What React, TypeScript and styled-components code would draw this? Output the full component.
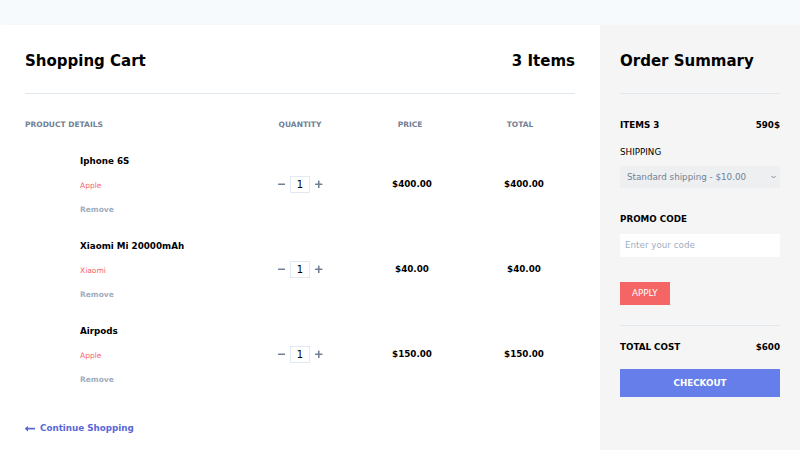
import React from "react";
import styled, { createGlobalStyle } from "styled-components";

const GlobalStyle = createGlobalStyle`
  html, body { margin: 0; padding: 0; }
  body {
    background: #f7fafc;
    font-family: "DejaVu Sans", "Noto Sans", sans-serif;
    font-size: 10px;
    line-height: 1.5;
    color: #000;
  }
  * { box-sizing: border-box; }
`;

const Page = styled.div`
  padding-top: 25px;
`;

const Card = styled.div`
  display: flex;
  box-shadow: 0 4px 6px -1px rgba(0,0,0,0.1), 0 2px 4px -1px rgba(0,0,0,0.06);
`;

const CartPanel = styled.div`
  width: 600px;
  background: #fff;
  padding: 25px;
`;

const SummaryPanel = styled.div`
  width: 200px;
  background: #f5f5f5;
  padding: 25px 20px;
`;

const HeaderRow = styled.div`
  display: flex;
  justify-content: space-between;
  border-bottom: 1px solid #e2e8f0;
  padding-bottom: 20px;
`;

const Title = styled.h1`
  margin: 0;
  font-size: 15px;
  font-weight: 700;
  line-height: 22.5px;
`;

const SummaryTitle = styled(Title)`
  border-bottom: 1px solid #e2e8f0;
  padding-bottom: 20px;
`;

const ColumnHeads = styled.div`
  display: flex;
  margin-top: 25px;
  margin-bottom: 12.5px;
`;

const ColHead = styled.h3<{ $w: string; $center?: boolean }>`
  margin: 0;
  width: ${(p) => p.$w};
  text-align: ${(p) => (p.$center ? "center" : "left")};
  font-size: 7.5px;
  line-height: 11.25px;
  font-weight: 700;
  color: #718096;
  text-transform: uppercase;
`;

const ItemRow = styled.div`
  display: flex;
  align-items: center;
  margin: 0 -20px;
  padding: 12.5px 15px;
`;

const Product = styled.div`
  display: flex;
  width: 40%;
`;

const Thumb = styled.div`
  width: 50px;
  height: 60px;
  flex-shrink: 0;
`;

const ProductInfo = styled.div`
  display: flex;
  flex-direction: column;
  justify-content: space-between;
  margin-left: 10px;
  flex-grow: 1;
`;

const ProductName = styled.span`
  font-weight: 700;
  font-size: 8.75px;
  line-height: 13.125px;
`;

const Brand = styled.span`
  color: #f56565;
  font-size: 7.5px;
  line-height: 11.25px;
`;

const RemoveLink = styled.a`
  color: #a0aec0;
  font-weight: 700;
  font-size: 7.5px;
  line-height: 11.25px;
  text-decoration: none;
`;

const Qty = styled.div`
  display: flex;
  justify-content: center;
  align-items: center;
  width: 20%;
`;

const QtyIcon = styled.svg`
  width: 7.5px;
  fill: #718096;
`;

const QtyInput = styled.input`
  margin: 0 5px;
  width: 20px;
  border: 1px solid #e2e8f0;
  text-align: center;
  font-family: inherit;
  font-size: 10px;
  line-height: 15px;
  padding: 0;
  color: #000;
  background: #fff;
  outline: none;
`;

const Amount = styled.span`
  width: 20%;
  text-align: center;
  font-weight: 700;
  font-size: 8.75px;
  line-height: 13.125px;
`;

const ContinueLink = styled.a`
  display: flex;
  align-items: center;
  margin-top: 25px;
  font-weight: 700;
  font-size: 8.75px;
  line-height: 13.125px;
  color: #5a67d8;
  text-decoration: none;
`;

const ArrowIcon = styled.svg`
  width: 10px;
  margin-right: 5px;
  fill: #5a67d8;
`;

const SumRow = styled.div`
  display: flex;
  justify-content: space-between;
  margin-top: 25px;
  margin-bottom: 12.5px;
  font-weight: 700;
  font-size: 8.75px;
  line-height: 13.125px;
  text-transform: uppercase;
`;

const ShippingBlock = styled.div`
  padding-top: 1.5px;
`;

const Label = styled.label<{ $bold?: boolean }>`
  display: block;
  margin-bottom: 7.5px;
  font-size: 8.75px;
  line-height: 13.125px;
  font-weight: ${(p) => (p.$bold ? 700 : 400)};
  text-transform: uppercase;
`;

const SelectWrap = styled.div`
  position: relative;
`;

const Select = styled.select`
  display: block;
  width: 100%;
  appearance: none;
  -webkit-appearance: none;
  border: none;
  border-radius: 0;
  background: #edeff1;
  padding: 4px 5px 4px 7px;
  font-family: inherit;
  font-size: 8.75px;
  line-height: 13.125px;
  height: 22px;
  color: #718096;
  outline: none;
`;

const Chevron = styled.svg`
  position: absolute;
  right: 4px;
  top: 9px;
  width: 5px;
  height: 4px;
  pointer-events: none;
`;

const PromoBlock = styled.div`
  padding: 25px 0;
`;

const PromoInput = styled.input`
  display: block;
  width: 100%;
  border: none;
  background: #fff;
  padding: 5px;
  font-family: inherit;
  font-size: 8.75px;
  line-height: 13.125px;
  height: 23.125px;
  outline: none;
  &::placeholder { color: #a0aec0; }
`;

const ApplyButton = styled.button`
  border: none;
  background: #f56565;
  color: #fff;
  padding: 5px 12px;
  font-family: inherit;
  font-size: 8.75px;
  line-height: 13.125px;
  text-transform: uppercase;
  cursor: pointer;
`;

const TotalBlock = styled.div`
  border-top: 1px solid #e2e8f0;
  margin-top: 20px;
`;

const TotalRow = styled.div`
  display: flex;
  justify-content: space-between;
  padding: 15px 0;
  font-weight: 700;
  font-size: 8.75px;
  line-height: 13.125px;
  text-transform: uppercase;
`;

const CheckoutButton = styled.button`
  display: block;
  width: 100%;
  border: none;
  background: #667eea;
  color: #fff;
  padding: 7.5px 0;
  font-family: inherit;
  font-weight: 700;
  font-size: 8.75px;
  line-height: 13.125px;
  text-transform: uppercase;
  cursor: pointer;
`;

const items = [
  { name: "Iphone 6S", brand: "Apple", price: "$400.00" },
  { name: "Xiaomi Mi 20000mAh", brand: "Xiaomi", price: "$40.00" },
  { name: "Airpods", brand: "Apple", price: "$150.00" },
];

const MinusIcon = () => (
  <QtyIcon viewBox="0 0 448 512">
    <path d="M416 208H32c-17.67 0-32 14.33-32 32v32c0 17.67 14.33 32 32 32h384c17.67 0 32-14.33 32-32v-32c0-17.67-14.33-32-32-32z" />
  </QtyIcon>
);

const PlusIcon = () => (
  <QtyIcon viewBox="0 0 448 512">
    <path d="M416 208H272V64c0-17.67-14.33-32-32-32h-32c-17.67 0-32 14.33-32 32v144H32c-17.67 0-32 14.33-32 32v32c0 17.67 14.33 32 32 32h144v144c0 17.67 14.33 32 32 32h32c17.67 0 32-14.33 32-32V304h144c17.67 0 32-14.33 32-32v-32c0-17.67-14.33-32-32-32z" />
  </QtyIcon>
);

export default function App() {
  return (
    <>
      <GlobalStyle />
      <Page>
        <Card>
          <CartPanel>
            <HeaderRow>
              <Title>Shopping Cart</Title>
              <Title as="h2">3 Items</Title>
            </HeaderRow>
            <ColumnHeads>
              <ColHead $w="40%">Product Details</ColHead>
              <ColHead $w="20%" $center>Quantity</ColHead>
              <ColHead $w="20%" $center>Price</ColHead>
              <ColHead $w="20%" $center>Total</ColHead>
            </ColumnHeads>
            {items.map((it) => (
              <ItemRow key={it.name}>
                <Product>
                  <Thumb />
                  <ProductInfo>
                    <ProductName>{it.name}</ProductName>
                    <Brand>{it.brand}</Brand>
                    <RemoveLink href="#">Remove</RemoveLink>
                  </ProductInfo>
                </Product>
                <Qty>
                  <MinusIcon />
                  <QtyInput type="text" defaultValue="1" />
                  <PlusIcon />
                </Qty>
                <Amount>{it.price}</Amount>
                <Amount>{it.price}</Amount>
              </ItemRow>
            ))}
            <ContinueLink href="#">
              <ArrowIcon viewBox="0 0 448 512">
                <path d="M134.059 296H436c6.627 0 12-5.373 12-12v-56c0-6.627-5.373-12-12-12H134.059v-46.059c0-21.382-25.851-32.09-40.971-16.971L7.029 239.029c-9.373 9.373-9.373 24.569 0 33.941l86.059 86.059c15.119 15.119 40.971 4.411 40.971-16.971V296z" />
              </ArrowIcon>
              Continue Shopping
            </ContinueLink>
          </CartPanel>
          <SummaryPanel>
            <SummaryTitle>Order Summary</SummaryTitle>
            <SumRow>
              <span>Items 3</span>
              <span>590$</span>
            </SumRow>
            <ShippingBlock>
              <Label>Shipping</Label>
              <SelectWrap>
                <Select defaultValue="std">
                  <option value="std">Standard shipping - $10.00</option>
                </Select>
                <Chevron viewBox="0 0 10 7">
                  <path d="M1 1.5 L5 5.5 L9 1.5" fill="none" stroke="#718096" strokeWidth="1.8" />
                </Chevron>
              </SelectWrap>
            </ShippingBlock>
            <PromoBlock>
              <Label $bold htmlFor="promo">Promo Code</Label>
              <PromoInput id="promo" type="text" placeholder="Enter your code" />
            </PromoBlock>
            <ApplyButton>Apply</ApplyButton>
            <TotalBlock>
              <TotalRow>
                <span>Total cost</span>
                <span>$600</span>
              </TotalRow>
              <CheckoutButton>Checkout</CheckoutButton>
            </TotalBlock>
          </SummaryPanel>
        </Card>
      </Page>
    </>
  );
}
